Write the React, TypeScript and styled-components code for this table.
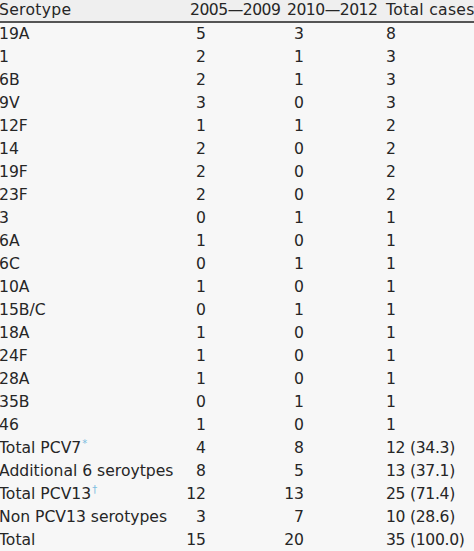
import React from "react";
import styled, { createGlobalStyle } from "styled-components";

const GlobalStyle = createGlobalStyle`
  html, body {
    margin: 0;
    padding: 0;
    background: #f7f7f7;
  }
  body {
    font-family: "DejaVu Sans", Verdana, sans-serif;
    color: #262626;
  }
`;

type Row = {
  label: string;
  mark?: string;
  a: string;
  b: string;
  total: string;
};

const rows: Row[] = [
  { label: "19A", a: "5", b: "3", total: "8" },
  { label: "1", a: "2", b: "1", total: "3" },
  { label: "6B", a: "2", b: "1", total: "3" },
  { label: "9V", a: "3", b: "0", total: "3" },
  { label: "12F", a: "1", b: "1", total: "2" },
  { label: "14", a: "2", b: "0", total: "2" },
  { label: "19F", a: "2", b: "0", total: "2" },
  { label: "23F", a: "2", b: "0", total: "2" },
  { label: "3", a: "0", b: "1", total: "1" },
  { label: "6A", a: "1", b: "0", total: "1" },
  { label: "6C", a: "0", b: "1", total: "1" },
  { label: "10A", a: "1", b: "0", total: "1" },
  { label: "15B/C", a: "0", b: "1", total: "1" },
  { label: "18A", a: "1", b: "0", total: "1" },
  { label: "24F", a: "1", b: "0", total: "1" },
  { label: "28A", a: "1", b: "0", total: "1" },
  { label: "35B", a: "0", b: "1", total: "1" },
  { label: "46", a: "1", b: "0", total: "1" },
  { label: "Total PCV7", mark: "*", a: "4", b: "8", total: "12 (34.3)" },
  { label: "Additional 6 seroytpes", a: "8", b: "5", total: "13 (37.1)" },
  { label: "Total PCV13", mark: "†", a: "12", b: "13", total: "25 (71.4)" },
  { label: "Non PCV13 serotypes", a: "3", b: "7", total: "10 (28.6)" },
  { label: "Total", a: "15", b: "20", total: "35 (100.0)" },
];

const Table = styled.div`
  display: grid;
  grid-template-columns: 186px 98px 98px 1fr;
  font-size: 15.6px;
  margin-left: -1px;
`;

const HeadCell = styled.div<{ $num?: boolean; $pad: number }>`
  height: 21px;
  line-height: 20px;
  padding-left: ${(p) => p.$pad}px;
  white-space: nowrap;
  background: #efefef;
  border-bottom: 2px solid #555;
  overflow: hidden;
  letter-spacing: ${(p) => (p.$num ? "-0.5px" : "0.3px")};
`;

const Cell = styled.div<{ $kind?: "label" | "num" | "total" }>`
  height: 23px;
  line-height: 23px;
  white-space: nowrap;
  ${(p) =>
    p.$kind === "num" &&
    `
    text-align: right;
    padding-right: 77px;
  `}
  ${(p) => p.$kind === "total" && `padding-left: 5px; letter-spacing: -0.3px;`}
`;

const Mark = styled.sup`
  color: #7dbde0;
  font-size: 10px;
  line-height: 0;
  vertical-align: 6px;
  margin-left: 1px;
`;

export default function App() {
  return (
    <>
      <GlobalStyle />
      <Table>
        <HeadCell $pad={0}>Serotype</HeadCell>
        <HeadCell $num $pad={5}>2005—2009</HeadCell>
        <HeadCell $num $pad={4}>2010—2012</HeadCell>
        <HeadCell $pad={5}>Total cases</HeadCell>
        {rows.map((r) => (
          <React.Fragment key={r.label}>
            <Cell $kind="label">
              {r.label}
              {r.mark && <Mark>{r.mark}</Mark>}
            </Cell>
            <Cell $kind="num">{r.a}</Cell>
            <Cell $kind="num">{r.b}</Cell>
            <Cell $kind="total">{r.total}</Cell>
          </React.Fragment>
        ))}
      </Table>
    </>
  );
}
